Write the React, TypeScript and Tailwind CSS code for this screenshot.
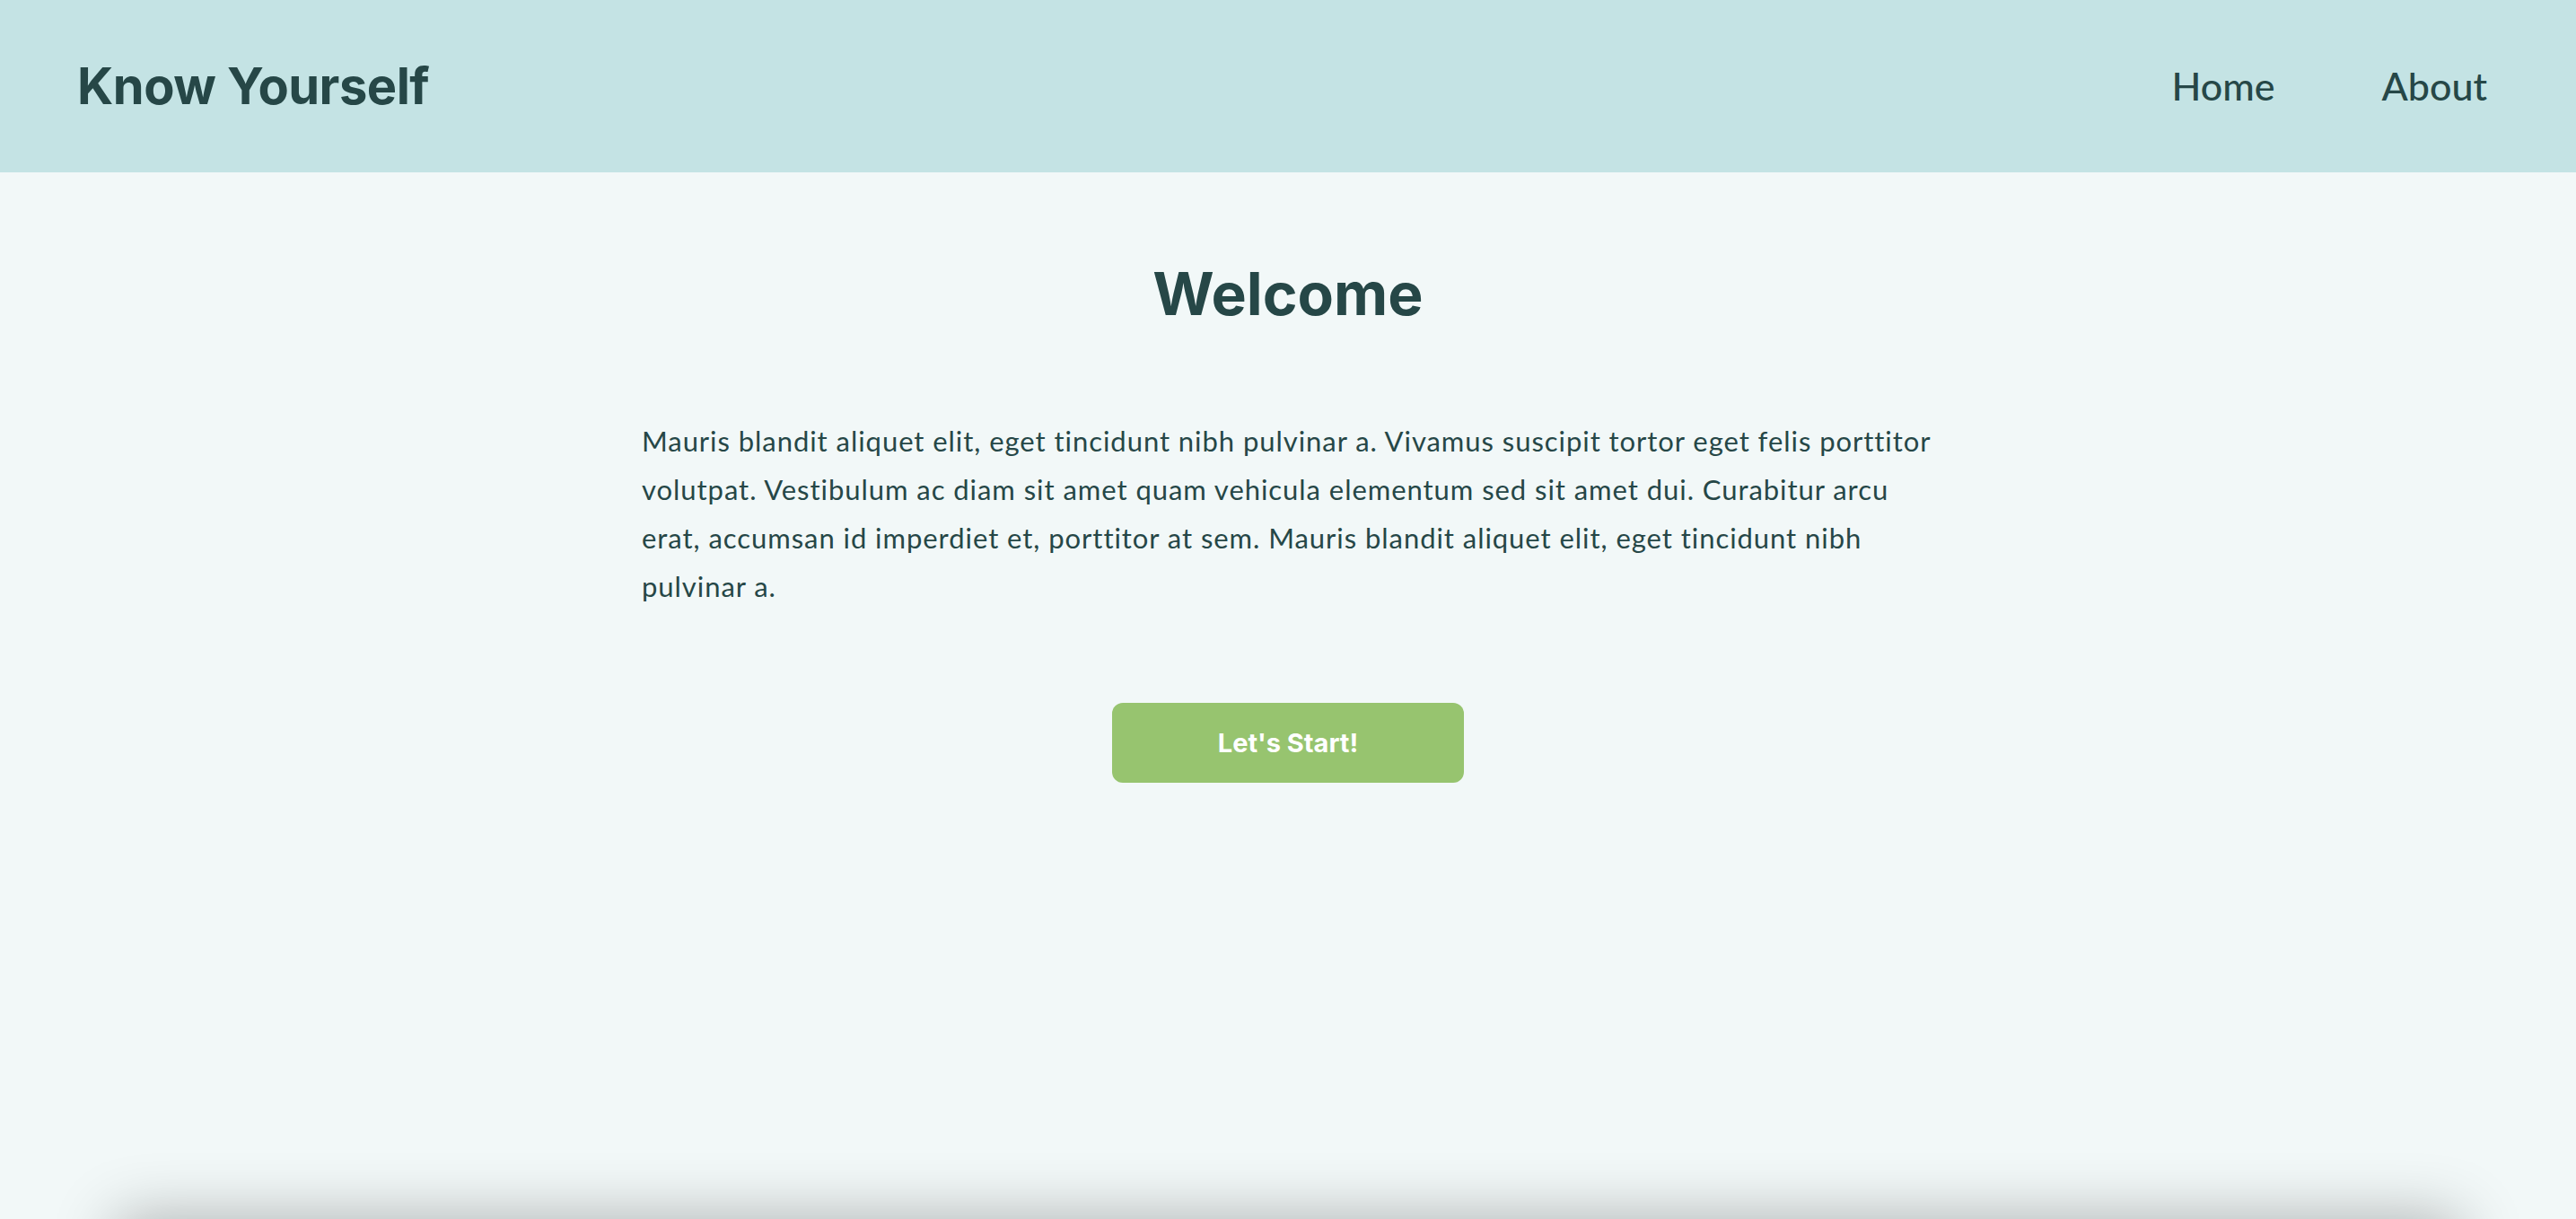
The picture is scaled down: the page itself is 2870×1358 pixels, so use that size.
import React from "react";

export default function App() {
  return (
    <div className="min-h-screen bg-[#f2f8f8] overflow-hidden">
      <header className="h-[192px] bg-[#c4e3e4] flex items-center justify-between pl-[86px] pr-[99px]">
        <div className="font-['Inter',sans-serif] text-[56px] font-bold text-[#264747] tracking-[-0.5px]">
          Know Yourself
        </div>
        <nav className="font-['Lato',sans-serif] flex items-center gap-[119px] text-[43px] font-medium text-[#264747]">
          <a>Home</a>
          <a>About</a>
        </nav>
      </header>
      <main className="h-[1166px] flex flex-col items-center">
        <h1 className="font-['Inter',sans-serif] mt-[102px] text-[66px] font-bold text-[#264747] leading-none">
          Welcome
        </h1>
        <div className="w-[1440px] mt-[104px]">
          <p className="w-[1447px] font-['Lato',sans-serif] text-[31px] tracking-[0.95px] leading-[54px] text-[#264747]">
            Mauris blandit aliquet elit, eget tincidunt nibh pulvinar a. Vivamus suscipit tortor eget felis porttitor volutpat. Vestibulum ac diam sit amet quam vehicula elementum sed sit amet dui. Curabitur arcu erat, accumsan id imperdiet et, porttitor at sem. Mauris blandit aliquet elit, eget tincidunt nibh pulvinar a.
          </p>
        </div>
        <button className="font-['Inter',sans-serif] mt-[103px] w-[392px] h-[89px] rounded-[12px] bg-[#97c46f] text-white text-[29px] font-bold">
          Let's Start!
        </button>
      </main>
      <div className="mx-[130px] h-[200px] bg-[#f2f8f8] shadow-[0_0_70px_rgba(0,0,0,0.3)]" />
    </div>
  );
}
